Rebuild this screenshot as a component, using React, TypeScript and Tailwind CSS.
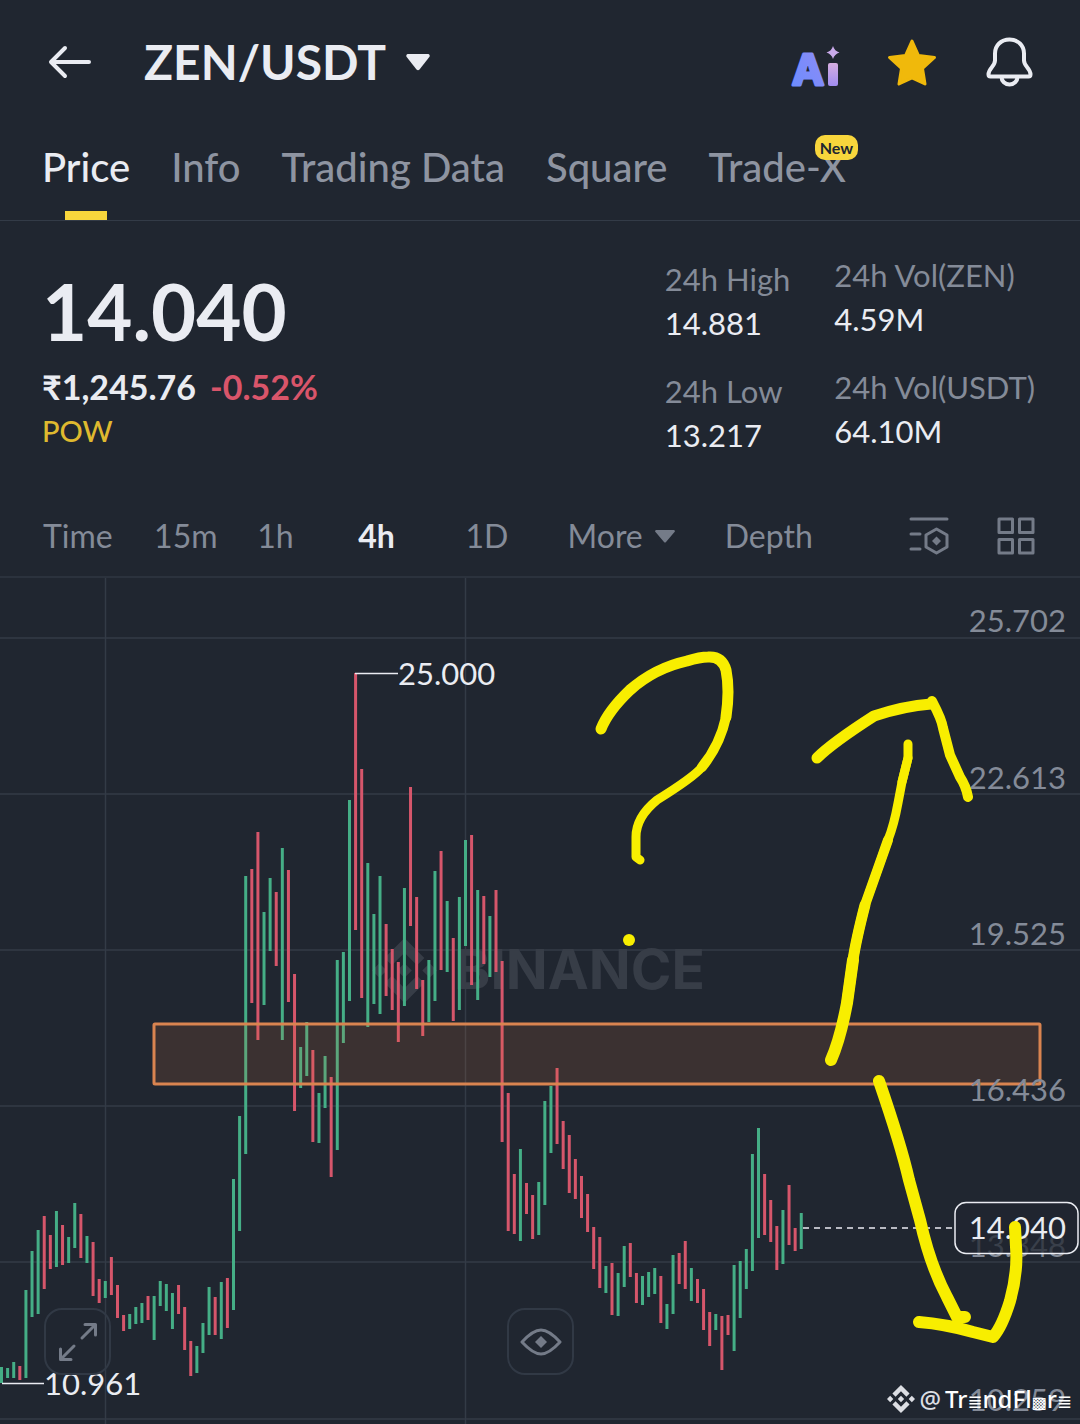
import { SiBinance } from "react-icons/si";

type Candle = [high: number, low: number, color: "g" | "r"];

type StatProps = {
  label: string;
  value: string;
};

const tabs = ["Price", "Info", "Trading Data", "Square", "Trade-X"];

const intervals = ["Time", "15m", "1h", "4h", "1D"];

const gridLines = [638, 794, 950, 1106, 1262, 1419];

const priceLabels = [
  { y: 632, text: "25.702" },
  { y: 789, text: "22.613" },
  { y: 945, text: "19.525" },
  { y: 1101, text: "16.436" },
  { y: 1257, text: "13.348" },
  { y: 1411, text: "10.259" },
];

// one entry per candle, top and bottom in chart units
const candles: Candle[] = [
  [1367, 1383, "g"], [1368, 1378, "g"], [1362, 1378, "g"], [1366, 1380, "r"],
  [1290, 1378, "g"], [1251, 1317, "g"], [1230, 1314, "g"], [1216, 1289, "r"],
  [1235, 1269, "r"], [1211, 1267, "g"], [1225, 1265, "r"], [1237, 1263, "g"],
  [1203, 1248, "g"], [1214, 1258, "r"], [1236, 1263, "g"], [1242, 1296, "r"],
  [1279, 1303, "r"], [1281, 1298, "g"], [1257, 1295, "r"], [1285, 1318, "r"],
  [1315, 1331, "r"], [1314, 1329, "g"], [1307, 1324, "g"], [1303, 1323, "g"],
  [1296, 1320, "r"], [1296, 1340, "g"], [1281, 1306, "g"], [1284, 1311, "g"],
  [1293, 1329, "g"], [1285, 1314, "r"], [1307, 1350, "r"], [1341, 1376, "r"],
  [1346, 1373, "g"], [1323, 1353, "g"], [1287, 1335, "g"], [1297, 1335, "r"],
  [1282, 1339, "g"], [1278, 1328, "r"], [1179, 1310, "g"], [1116, 1231, "g"],
  [876, 1154, "g"], [869, 1003, "r"], [832, 1040, "r"], [912, 1005, "g"],
  [878, 951, "g"], [892, 966, "r"], [848, 1040, "g"], [870, 1002, "r"],
  [974, 1111, "r"], [1047, 1088, "g"], [1022, 1076, "g"], [1050, 1142, "r"],
  [1093, 1143, "g"], [1056, 1108, "g"], [1077, 1177, "r"], [960, 1150, "g"],
  [952, 1043, "g"], [800, 1001, "g"], [673, 930, "r"], [769, 998, "r"],
  [863, 1027, "g"], [914, 1004, "g"], [876, 1014, "g"], [924, 996, "r"],
  [949, 1010, "r"], [962, 1042, "r"], [888, 1006, "g"], [787, 926, "r"],
  [897, 989, "r"], [980, 1036, "r"], [960, 1022, "g"], [871, 1001, "g"],
  [851, 970, "r"], [901, 972, "g"], [938, 1021, "r"], [897, 1010, "g"],
  [840, 946, "g"], [835, 985, "r"], [890, 1000, "g"], [896, 964, "r"],
  [916, 977, "g"], [890, 972, "r"], [961, 1142, "r"], [1093, 1231, "r"],
  [1174, 1234, "r"], [1149, 1241, "g"], [1183, 1214, "r"], [1195, 1239, "r"],
  [1182, 1235, "g"], [1101, 1205, "g"], [1086, 1153, "g"], [1068, 1144, "r"],
  [1121, 1169, "r"], [1135, 1193, "r"], [1159, 1199, "r"], [1176, 1218, "r"],
  [1194, 1232, "r"], [1227, 1269, "r"], [1237, 1288, "r"], [1266, 1293, "g"],
  [1263, 1315, "r"], [1273, 1316, "g"], [1246, 1287, "g"], [1243, 1277, "r"],
  [1273, 1303, "r"], [1276, 1305, "g"], [1272, 1297, "g"], [1268, 1294, "g"],
  [1276, 1323, "r"], [1304, 1329, "g"], [1255, 1314, "g"], [1253, 1284, "r"],
  [1241, 1289, "r"], [1268, 1301, "g"], [1279, 1303, "r"], [1289, 1330, "r"],
  [1312, 1346, "r"], [1314, 1330, "g"], [1316, 1370, "r"], [1315, 1335, "r"],
  [1265, 1351, "g"], [1261, 1318, "g"], [1249, 1289, "g"], [1154, 1271, "g"],
  [1128, 1238, "g"], [1174, 1235, "r"], [1200, 1242, "r"], [1226, 1270, "r"],
  [1210, 1264, "g"], [1185, 1245, "r"], [1228, 1251, "r"], [1213, 1249, "g"],
];

const candleX = (i: number) => 1.5 + i * 6.105;

const AiIcon = () => (
  <svg viewBox="0 0 52 64" className="h-16 w-[52px]" aria-hidden="true">
    <defs>
      <linearGradient id="ai-a" x1="0" y1="1" x2="1" y2="0">
        <stop offset="0" stopColor="#6b8dff" />
        <stop offset="1" stopColor="#8f8bf5" />
      </linearGradient>
      <linearGradient id="ai-i" x1="0" y1="1" x2="0" y2="0">
        <stop offset="0" stopColor="#a08cf0" />
        <stop offset="1" stopColor="#d6aee0" />
      </linearGradient>
    </defs>
    <text
      x="18"
      y="55"
      textAnchor="middle"
      fontSize="43"
      fill="url(#ai-a)"
      stroke="url(#ai-a)"
      strokeWidth="3"
      strokeLinejoin="round"
      className="font-[Inter,sans-serif] font-bold"
    >
      A
    </text>
    <rect x="38" y="33" width="10" height="23" rx="2" fill="url(#ai-i)" />
    <path d="M43 16q1.500 5 6.500 6.500q-5 1.500-6.500 6.500q-1.500-5-6.500-6.500q5-1.500 6.500-6.500z" fill="#c9aaea" />
  </svg>
);

const Header = () => (
  <header className="flex h-31 items-center px-12">
    <button type="button" aria-label="Back" className="w-11">
      <svg viewBox="0 0 44 36" className="w-11" fill="none" stroke="#eaecf2" strokeWidth="4" strokeLinecap="round" strokeLinejoin="round">
        <path d="M41 18H4M17 4 3 18l14 14" />
      </svg>
    </button>
    <button type="button" className="ml-13 flex items-center gap-5 text-[48px] leading-[52px] font-bold text-[#eaecf2]">
      ZEN/USDT
      <svg viewBox="0 0 24 17" className="w-6" fill="#eaecf2" aria-hidden="true">
        <path d="M1.500 0h21q2 1 .8 3L13.500 15.500q-1.500 1.500-3 0L.7 3Q-.5 1 1.500 0z" />
      </svg>
    </button>
    <div className="-mr-0.5 ml-auto flex items-center gap-11">
      <button type="button" aria-label="AI">
        <AiIcon />
      </button>
      <button type="button" aria-label="Favorite">
        <svg viewBox="0 0 52 52" className="size-[52px]" fill="#f0b90b" stroke="#f0b90b" strokeWidth="3" strokeLinejoin="round">
          <path d="m26 5 6.500 14.500 16 2-12 11L39 48l-13-6-13 6 2.500-15.500-12-11 16-2z" />
        </svg>
      </button>
      <button type="button" aria-label="Alerts">
        <svg viewBox="0 0 52 52" className="size-[52px]" fill="none" stroke="#eaecf2" strokeWidth="4" strokeLinejoin="round">
          <path d="M27.500 3.500c-8.500 0-14.500 6-14.500 14v7c0 6-6.500 7.500-6.500 14 0 1.500.5 2 2 2h38c1.500 0 2-.5 2-2 0-6.500-6.500-8-6.500-14v-7c0-8-6-14-14.500-14zM19.500 41c0 4 3.500 7.500 8 7.500s8-3.500 8-7.500" />
        </svg>
      </button>
    </div>
  </header>
);

const Tabs = () => (
  <nav className="mt-5 flex gap-[41px] border-b border-[#333b47] px-[42px] text-[40px] leading-[46px] font-medium">
    {tabs.map((tab) => (
      <a
        key={tab}
        href="#"
        className={`relative flex h-[76px] flex-col items-center justify-between whitespace-nowrap ${
          tab === "Price" ? "text-[#eaecf2]" : "text-[#8e94a1]"
        }`}
      >
        {tab}
        {tab === "Price" && <span className="h-[9px] w-[42px] bg-[#f8d63c]" />}
        {tab === "Trade-X" && (
          <span className="absolute -top-[9px] -right-3 rounded-[10px] bg-[#f8d63c] px-[5px] text-base leading-[25px] font-bold text-[#202630]">
            New
          </span>
        )}
      </a>
    ))}
  </nav>
);

const Stat = ({ label, value }: StatProps) => (
  <div>
    <dt className="text-[#848b98]">{label}</dt>
    <dd className="text-[#eaecf2]">{value}</dd>
  </div>
);

const Summary = () => (
  <section className="flex justify-between pt-8 pr-[45px] pl-[42px]">
    <div className="pt-4">
      <p className="text-[78px] leading-[84px] font-bold text-[#eaecf2]">14.040</p>
      <p className="mt-3 flex gap-3.5 text-[34px] leading-[44px] font-bold text-[#eaecf2]">
        ₹1,245.76 <span className="text-[#d9556a]">-0.52%</span>
      </p>
      <a href="#" className="text-[29px] leading-[44px] font-medium text-[#dfb92f]">
        POW
      </a>
    </div>
    <div className="flex gap-11 text-[31px] leading-[44px] whitespace-nowrap">
      <dl className="flex flex-col gap-6 pt-1">
        <Stat label="24h High" value="14.881" />
        <Stat label="24h Low" value="13.217" />
      </dl>
      <dl className="flex flex-col gap-6">
        <Stat label="24h Vol(ZEN)" value="4.59M" />
        <Stat label="24h Vol(USDT)" value="64.10M" />
      </dl>
    </div>
  </section>
);

const Intervals = () => (
  <div className="mt-14 grid grid-cols-[111fr_103fr_101fr_107fr_102fr_157fr_184fr_88fr_40fr] items-center justify-items-start border-b-2 border-[#2b323d] px-[43px] pb-[17px] text-[32px] leading-[46px] whitespace-nowrap text-[#848b98]">
    {intervals.map((item) => (
      <button key={item} type="button" className={item === "4h" ? "font-bold text-[#eaecf2]" : ""}>
        {item}
      </button>
    ))}
    <button type="button" className="flex items-center gap-3">
      More
      <svg viewBox="0 0 20 13" className="w-5" fill="#747b88" aria-hidden="true">
        <path d="M1 0h18q1.500 1 .5 2L11 12q-1 1-2 0L.5 2Q-.5 1 1 0z" />
      </svg>
    </button>
    <button type="button">Depth</button>
    <button type="button" aria-label="Indicators">
      <svg viewBox="0 0 40 40" className="size-10" fill="none" stroke="#747b88" strokeWidth="3" strokeLinecap="round" strokeLinejoin="round">
        <path d="M2 3h36M2 18h9M2 33h9M27.500 13l10.500 6v12l-10.500 6-10.500-6V19z" />
        <path d="m27.500 20.500 4.500 4.500-4.500 4.500-4.500-4.500z" fill="#747b88" stroke="none" />
      </svg>
    </button>
    <button type="button" aria-label="Layout">
      <svg viewBox="0 0 38 38" className="size-[38px]" fill="none" stroke="#747b88" strokeWidth="3" strokeLinejoin="round">
        <path d="M2 2h13.500v13.500H2zM22.500 2H36v13.500H22.500zM2 22.500h13.500V36H2zM22.500 22.500H36V36H22.500z" />
      </svg>
    </button>
  </div>
);

const Chart = () => (
  <svg viewBox="0 578 1080 846" className="block w-full" fontSize="31" role="img" aria-label="ZEN/USDT 4h chart">
    <g stroke="#333b46" strokeWidth="1.500">
      {gridLines.map((y) => (
        <line key={y} x1="0" x2="1080" y1={y} y2={y} />
      ))}
      <line x1="105.500" x2="105.500" y1="578" y2="1424" />
      <line x1="465.500" x2="465.500" y1="578" y2="1424" />
    </g>

    <g fill="#373d47" color="#373d47">
      <SiBinance x="372" y="938" size={65} />
      <text x="454" y="989" fontSize="55" className="font-[Inter,sans-serif] font-bold">
        BINANCE
      </text>
    </g>

    {candles.map(([high, low, color], i) => (
      <line
        key={i}
        x1={candleX(i)}
        x2={candleX(i)}
        y1={high}
        y2={low}
        strokeWidth="3"
        stroke={color === "g" ? "#45ae86" : "#d6566b"}
      />
    ))}

    <rect x="154" y="1024" width="886" height="60" rx="1" fill="#e07b39" fillOpacity="0.14" stroke="#d98450" strokeWidth="3" />

    <g fill="#848b98" textAnchor="end">
      {priceLabels.map(({ y, text }) => (
        <text key={text} x="1066" y={y}>
          {text}
        </text>
      ))}
    </g>

    <g stroke="#eaecf2" strokeWidth="1.500">
      <path d="M355 673.500h43M2 1383.500h42" />
      <path d="M803 1228h152" strokeDasharray="6 5" />
    </g>
    <g fill="#eaecf2">
      <text x="398" y="685">25.000</text>
      <text x="44" y="1395">10.961</text>
    </g>

    <rect x="955" y="1202.500" width="123" height="51" rx="11" fill="#202630" fillOpacity="0.75" stroke="#eaecf2" strokeWidth="1.500" />
    <text x="1066" y="1239" textAnchor="end" fill="#eaecf2">
      14.040
    </text>
  </svg>
);

// freehand marks drawn over the chart
const Scribble = () => (
  <svg
    viewBox="0 578 1080 846"
    className="pointer-events-none absolute inset-0 w-full"
    fill="none"
    stroke="#f8ee00"
    strokeWidth="11"
    strokeLinecap="round"
    strokeLinejoin="round"
    aria-hidden="true"
  >
    <path d="M601 729Q608 711 630 690Q655 668 687 661Q700 657 708 657Q722 656 726 670Q730 690 726 717" />
    <path d="M726 717Q720 745 702 767" strokeWidth="10" />
    <path d="M702 767Q694 777 657 800Q636 817 636 837V857L640 860" strokeWidth="9" />
    <circle cx="629" cy="940" r="6" fill="#f8ee00" stroke="none" />
    <path d="M817 758Q832 743 874 716Q904 706 931 704" />
    <path d="M932 701Q942 720 943 728L950 755L960 777Q966 786 968 797" strokeWidth="10" />
    <path d="M908 744V758L902 782" strokeWidth="9" />
    <path d="M908 758L902 782L898 803Q894 825 888 840L882 857L865 905" strokeWidth="9" />
    <path d="M888 840L882 857L865 905Q856 940 853 960" strokeWidth="10" />
    <path d="M865 905Q856 940 853 960L847 1003" strokeWidth="11" />
    <path d="M853 960L847 1003Q840 1040 831 1060" strokeWidth="12" />
    <path d="M879 1081Q901 1145 909 1180L920 1220Q930 1265 947 1297L957 1317H965" strokeWidth="12" />
    <path d="M919 1322Q945 1324 973 1332L993 1337Q1002 1327 1010 1301Q1018 1272 1016 1247L1015 1227" strokeWidth="12" />
  </svg>
);

const toolButton =
  "absolute bottom-[49px] flex size-[67px] items-center justify-center rounded-[18px] border-2 border-[#313945]";

const App = () => {
  return (
    <main className="min-h-screen bg-[#202630] font-[Lato,'Open_Sans',sans-serif]">
      <Header />
      <Tabs />
      <Summary />
      <Intervals />
      <section className="relative overflow-hidden">
        <Chart />
        <button type="button" aria-label="Expand chart" className={`${toolButton} left-[44px]`}>
          <svg viewBox="0 0 40 40" className="size-10" fill="none" stroke="#747b88" strokeWidth="3" strokeLinecap="round" strokeLinejoin="round">
            <path d="M24 16 37 3M27 2.500h10.500V13M16 24 3 37M2.500 27v10.500H13" />
          </svg>
        </button>
        <button type="button" aria-label="Toggle drawings" className={`${toolButton} left-1/2 -ml-[33px]`}>
          <svg viewBox="0 0 42 28" className="w-[42px]" fill="none" stroke="#747b88" strokeWidth="3" strokeLinejoin="round">
            <path d="M2 14Q13 2 21 2T40 14Q29 26 21 26T2 14z" />
            <path d="m21 8 6 6-6 6-6-6z" fill="#747b88" stroke="none" />
          </svg>
        </button>
        <Scribble />
        <p className="absolute right-2 bottom-[9px] flex items-center gap-1 font-['Noto_Sans','DejaVu_Sans',sans-serif] text-2xl leading-[32px] font-medium text-white">
          <SiBinance className="size-7 text-[#dcdee3]" />
          <span className="text-[#dcdee3]">@</span>
          <span>
            Tr<span className="text-lg">≣</span>ndFl<span className="text-base">▩</span>r
            <span className="text-lg">≣</span>
          </span>
        </p>
      </section>
    </main>
  );
};
export default App;
